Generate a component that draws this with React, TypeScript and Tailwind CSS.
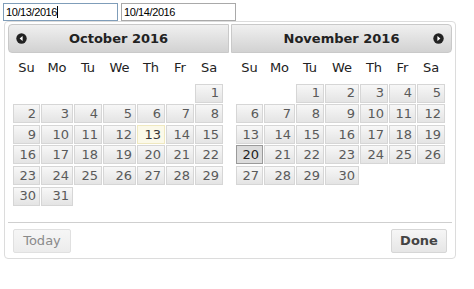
import React from "react";

type Month = {
  title: string;
  offset: number;
  days: number;
  cols: string;
  pad: string;
  side: "left" | "right";
};

const names = ["Su", "Mo", "Tu", "We", "Th", "Fr", "Sa"];

const months: Month[] = [
  {
    title: "October 2016",
    offset: 6,
    days: 31,
    cols: "grid-cols-[27px_32px_28px_33px_28px_28px_28px]",
    pad: "pl-[5px]",
    side: "left",
  },
  {
    title: "November 2016",
    offset: 2,
    days: 30,
    cols: "grid-cols-[27px_31px_28px_34px_28px_27px_28px]",
    pad: "pl-[6px]",
    side: "right",
  },
];

function Arrow({ dir }: { dir: "prev" | "next" }) {
  return (
    <svg width="11" height="11" viewBox="0 0 11 11">
      <circle cx="5.5" cy="5.5" r="5.2" fill="#222" />
      {dir === "prev" ? (
        <path d="M6.6 3 L3.6 5.5 L6.6 8 Z" fill="#fff" />
      ) : (
        <path d="M4.4 3 L7.4 5.5 L4.4 8 Z" fill="#fff" />
      )}
    </svg>
  );
}

function Cal({ m }: { m: Month }) {
  const cells: (number | null)[] = [];
  for (let i = 0; i < m.offset; i++) cells.push(null);
  for (let d = 1; d <= m.days; d++) cells.push(d);
  const isLeft = m.side === "left";

  return (
    <div className="w-[222px] flex flex-col">
      <div
        className={`h-[29px] flex items-center justify-between px-[7px] border border-[#c9c9c9] bg-gradient-to-b from-[#f0f0f0] to-[#d2d2d2] ${
          isLeft ? "rounded-l-[4px] mr-[1px]" : "rounded-r-[4px] ml-[1px]"
        }`}
      >
        <div className="w-[14px] flex justify-start">{isLeft && <Arrow dir="prev" />}</div>
        <div className="text-[13px] font-bold text-[#222]">{m.title}</div>
        <div className="w-[14px] flex justify-end">{!isLeft && <Arrow dir="next" />}</div>
      </div>
      <div className={`${m.pad}`}>
        <div className={`grid ${m.cols} gap-x-[1px] gap-y-[1.6px]`}>
          {names.map((n) => (
            <div key={n} className="h-[29px] flex items-center justify-center text-[13px] text-[#222]">
              {n}
            </div>
          ))}
          {cells.map((d, i) => {
            if (d === null) return <div key={"e" + i} />;
            const today = isLeft && d === 13;
            const active = !isLeft && d === 20;
            let cls =
              "border-[#d6d6d6] bg-gradient-to-b from-[#f7f7f7] to-[#e4e4e4] text-[#5a5a5a]";
            if (today) cls = "border-[#efe8bf] bg-[#fbf9e9] text-[#363636]";
            if (active) cls = "border-[#9a9a9a] bg-[#dcdcdc] text-[#222]";
            return (
              <div
                key={d}
                className={`h-[19px] border flex items-center justify-end pr-[3px] text-[13px] ${cls}`}
              >
                {d}
              </div>
            );
          })}
        </div>
      </div>
    </div>
  );
}

export default function App() {
  return (
    <div className="w-[474px] h-[289px] bg-white pt-[3px] pl-[3px] font-['DejaVu_Sans',Verdana,sans-serif]">
      <div className="flex gap-[3px] font-['Liberation_Sans',Arial,sans-serif] text-[11px] text-black">
        <div className="w-[115px] h-[18px] border border-[#7f9db9] flex items-center px-[2px] tracking-[-0.4px]">
          10/13/2016<span className="w-px h-[12px] bg-black" />
        </div>
        <div className="w-[115px] h-[18px] border border-[#a9a9a9] flex items-center px-[2px] tracking-[-0.4px]">
          10/14/2016
        </div>
      </div>
      <div className="ml-[1px] w-[452px] border border-[#dcdcdc] rounded-[4px] px-[3px] pt-[2px] pb-[5px] flex flex-col">
        <div className="flex">
          {months.map((m) => (
            <Cal key={m.title} m={m} />
          ))}
        </div>
        <div className="mt-[16px] border-t border-[#cfcfcf] pt-[6px] flex justify-between px-[5px]">
          <div className="w-[58px] h-[24px] border border-[#e0e0e0] rounded-[2px] bg-gradient-to-b from-[#f6f6f6] to-[#ececec] flex items-center justify-center text-[13px] text-[#8a8a8a]">
            Today
          </div>
          <div className="w-[56px] h-[24px] border border-[#d6d6d6] rounded-[2px] bg-gradient-to-b from-[#f6f6f6] to-[#e6e6e6] flex items-center justify-center text-[13px] font-bold text-[#444]">
            Done
          </div>
        </div>
      </div>
    </div>
  );
}
